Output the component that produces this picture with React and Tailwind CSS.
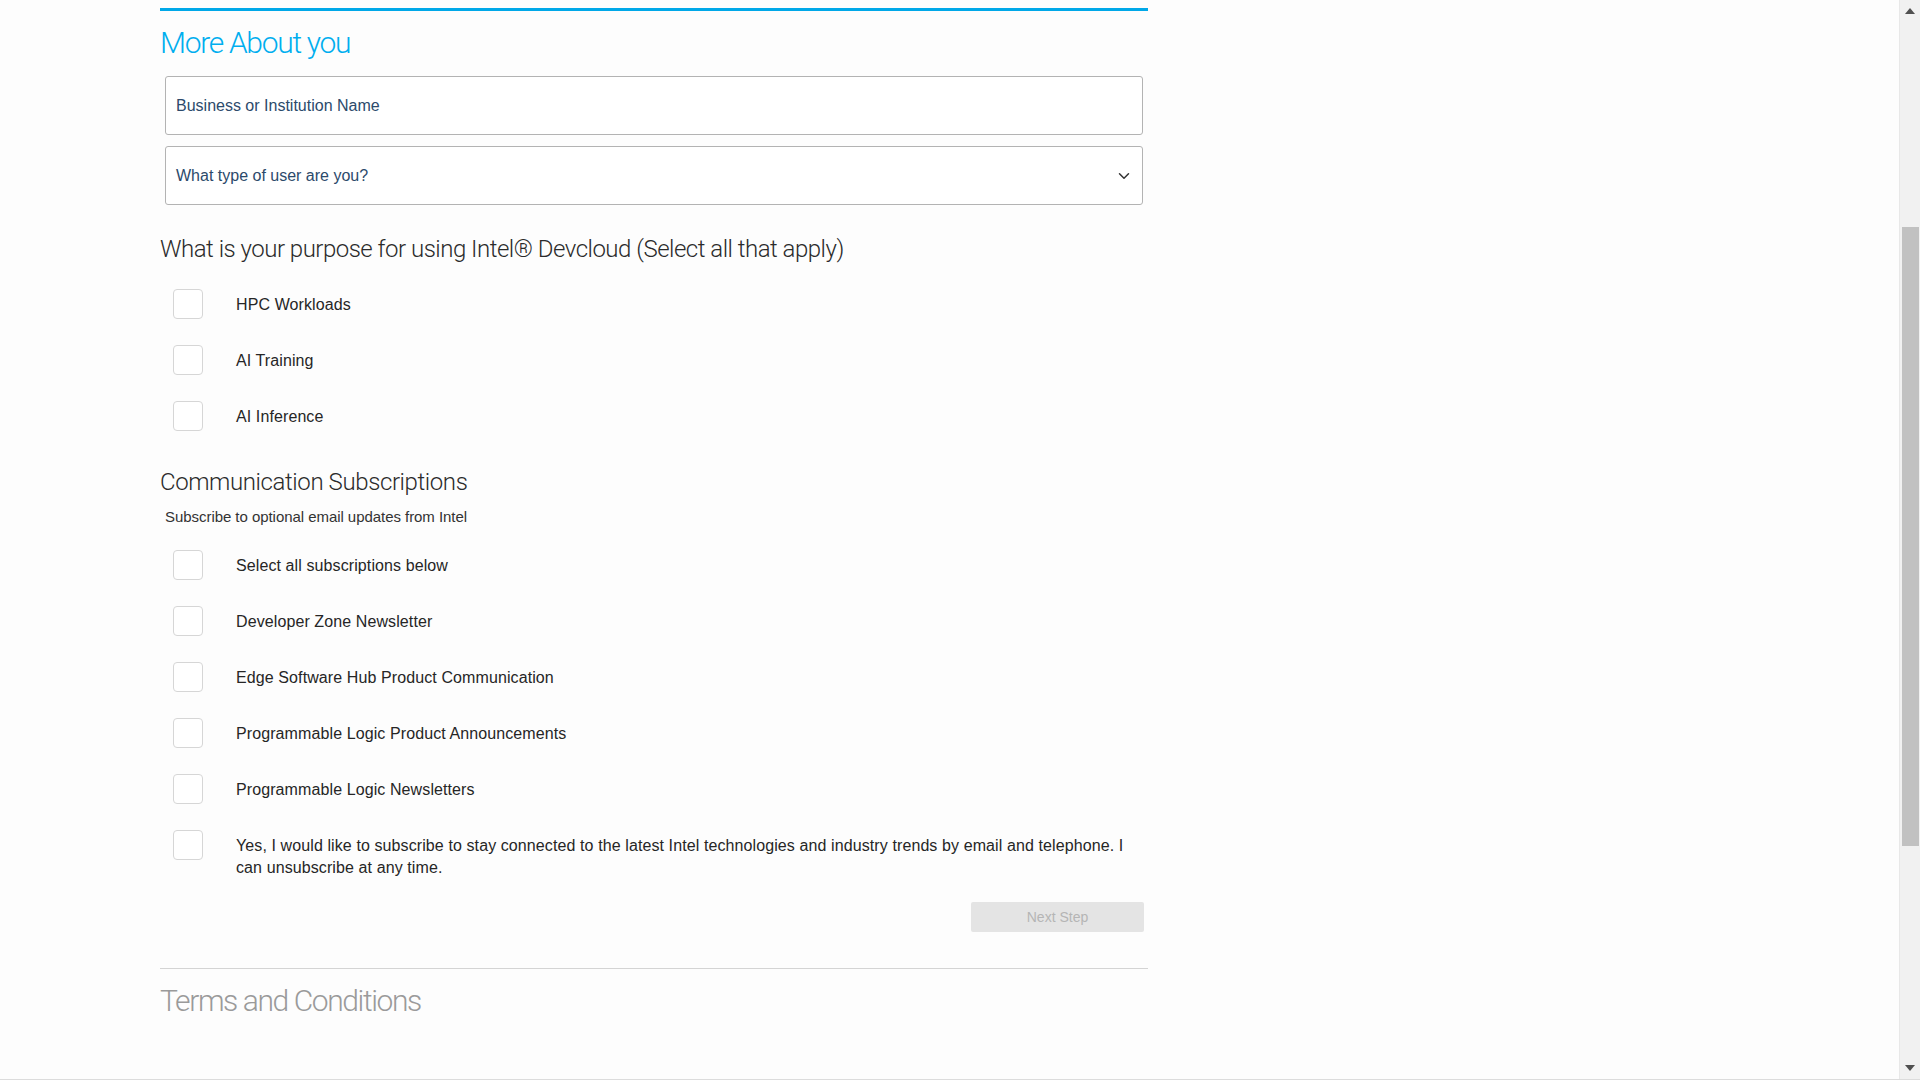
import { ChevronDown } from 'lucide-react'

const purposes = ['HPC Workloads', 'AI Training', 'AI Inference']

const subscriptions = [
  'Select all subscriptions below',
  'Developer Zone Newsletter',
  'Edge Software Hub Product Communication',
  'Programmable Logic Product Announcements',
  'Programmable Logic Newsletters',
]

function CheckRow({ label }) {
  return (
    <div className="flex h-[56px] items-start">
      <div className="ml-[13px] mt-[13px] h-[30px] w-[30px] shrink-0 rounded-[4px] border border-[#d6d6d6] bg-white"></div>
      <div className="ml-[33px] mt-[18px] text-[16px] leading-[22px] tracking-[0.1px] text-[#262626]">{label}</div>
    </div>
  )
}

export default function App() {
  return (
    <div className="flex h-[1080px] overflow-hidden border-b border-[#dcdcdc] bg-[#fdfdfd] font-['Liberation_Sans',Arial,sans-serif]">
      <div className="flex-1">
        <div className="ml-[160px] w-[988px]">
          <div className="mt-[8px] h-[3px] bg-[#00a8e8]"></div>

          <h1 className="mt-[14px] font-['Roboto',sans-serif] text-[30px] font-light leading-[36px] tracking-[-1.3px] text-[#00aeef]">
            More About you
          </h1>

          <div className="mx-[5px] mt-[15px] flex h-[59px] items-center rounded-[3px] border border-[#b3b3b3] bg-white px-[10px] text-[16px] text-[#2c4a6b]">
            Business or Institution Name
          </div>
          <div className="mx-[5px] mt-[11px] flex h-[59px] items-center justify-between rounded-[3px] border border-[#b3b3b3] bg-white pl-[10px] pr-[9px] text-[16px] text-[#2c4a6b]">
            <span>What type of user are you?</span>
            <ChevronDown className="h-[18px] w-[18px] text-[#333]" strokeWidth={2} />
          </div>

          <h2 className="mt-[28px] font-['Roboto',sans-serif] text-[24px] font-light leading-[32px] tracking-[-0.5px] text-[#2b2b2b]">
            What is your purpose for using Intel® Devcloud (Select all that apply)
          </h2>

          <div className="mt-[11px]">
            {purposes.map((p) => (
              <CheckRow key={p} label={p} />
            ))}
          </div>

          <h2 className="mt-[22px] font-['Roboto',sans-serif] text-[24px] font-light leading-[32px] tracking-[-0.4px] text-[#2b2b2b]">
            Communication Subscriptions
          </h2>
          <p className="ml-[5px] mt-[9px] text-[15px] leading-[20px] tracking-[-0.05px] text-[#333]">
            Subscribe to optional email updates from Intel
          </p>

          <div className="mt-[10px]">
            {subscriptions.map((s) => (
              <CheckRow key={s} label={s} />
            ))}
            <div className="flex items-start">
              <div className="ml-[13px] mt-[13px] h-[30px] w-[30px] shrink-0 rounded-[4px] border border-[#d6d6d6] bg-white"></div>
              <div className="ml-[33px] mt-[18px] w-[910px] text-[16px] leading-[22px] tracking-[0.1px] text-[#262626]">
                Yes, I would like to subscribe to stay connected to the latest Intel technologies and industry trends by email and telephone. I can unsubscribe at any time.
              </div>
            </div>
          </div>

          <div className="mr-[4px] mt-[23px] flex justify-end">
            <button className="h-[30px] w-[173px] rounded-[2px] bg-[#e4e4e4] text-[14px] text-[#b5b5b5]">
              Next Step
            </button>
          </div>

          <div className="mt-[36px] h-px bg-[#d4d4d4]"></div>

          <h2 className="mt-[14px] font-['Roboto',sans-serif] text-[30px] font-light leading-[36px] tracking-[-1.4px] text-[#9a9a9a]">
            Terms and Conditions
          </h2>
        </div>
      </div>

      <div className="relative w-[21px] border-l border-[#e8e8e8] bg-[#f1f1f1]">
        <svg className="absolute left-[5px] top-[8px]" width="10" height="6" viewBox="0 0 10 6">
          <path d="M5 0 L10 6 L0 6 Z" fill="#505050" />
        </svg>
        <div className="absolute left-[2px] top-[227px] h-[619px] w-[17px] bg-[#c1c1c1]"></div>
        <svg className="absolute bottom-[8px] left-[5px]" width="10" height="6" viewBox="0 0 10 6">
          <path d="M0 0 L10 0 L5 6 Z" fill="#505050" />
        </svg>
      </div>
    </div>
  )
}
